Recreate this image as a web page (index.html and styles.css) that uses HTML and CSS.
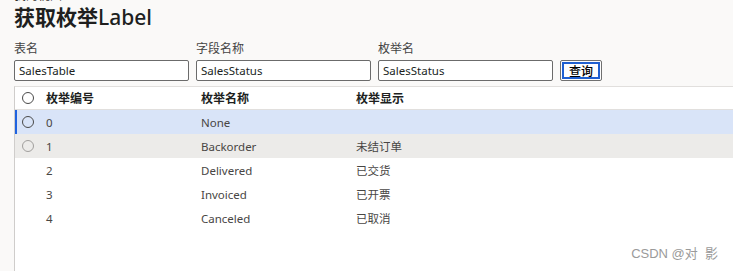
FILE: index.html
```html
<!DOCTYPE html>
<html lang="zh-CN">
<head>
  <meta charset="UTF-8">
  <meta name="viewport" content="width=device-width, initial-scale=1.0">
  <title>获取枚举Label</title>
  <link rel="stylesheet" href="styles.css">
</head>
<body>

  <div class="page">
    <div class="crumb">我的视图</div>
    <h1 class="title">获取枚举<span class="latin">Label</span></h1>

    <div class="filters">
      <div class="field">
        <label for="table">表名</label>
        <input type="text" id="table" value="SalesTable">
      </div>
      <div class="field">
        <label for="field">字段名称</label>
        <input type="text" id="field" value="SalesStatus">
      </div>
      <div class="field">
        <label for="enum">枚举名</label>
        <input type="text" id="enum" value="SalesStatus">
      </div>
      <button type="button" class="query">查询</button>
    </div>

    <div class="grid">
      <div class="row head">
        <div class="cell pick"><span class="radio"></span></div>
        <div class="cell">枚举编号</div>
        <div class="cell">枚举名称</div>
        <div class="cell">枚举显示</div>
      </div>
      <div class="row selected">
        <div class="cell pick"><span class="radio"></span></div>
        <div class="cell">0</div>
        <div class="cell">None</div>
        <div class="cell"></div>
      </div>
      <div class="row hover">
        <div class="cell pick"><span class="radio light"></span></div>
        <div class="cell">1</div>
        <div class="cell">Backorder</div>
        <div class="cell">未结订单</div>
      </div>
      <div class="row">
        <div class="cell pick"></div>
        <div class="cell">2</div>
        <div class="cell">Delivered</div>
        <div class="cell">已交货</div>
      </div>
      <div class="row">
        <div class="cell pick"></div>
        <div class="cell">3</div>
        <div class="cell">Invoiced</div>
        <div class="cell">已开票</div>
      </div>
      <div class="row">
        <div class="cell pick"></div>
        <div class="cell">4</div>
        <div class="cell">Canceled</div>
        <div class="cell">已取消</div>
      </div>
    </div>
  </div>

  <div class="watermark">CSDN @对&nbsp;&nbsp;影</div>

</body>
</html>
```

FILE: styles.css
```css
body {
  margin: 0;
  padding: 0;
  background-color: #faf9f8;
  font-family: "Noto Sans", "Noto Sans CJK SC", sans-serif;
  color: #323130;
  overflow: hidden;
}
.page {
  padding-left: 14px;
  height: 100vh;
  display: flex;
  flex-direction: column;
}
.crumb {
  font-size: 12px;
  line-height: 14px;
  margin-top: -11px;
  color: #323130;
}
.title {
  margin: 0;
  font-size: 21px;
  line-height: 28px;
  font-weight: 700;
  color: #201f1e;
}
.title .latin {
  font-weight: 500;
}
.filters {
  display: flex;
  align-items: flex-end;
  gap: 7px;
  margin-top: 10px;
}
.field label {
  display: block;
  font-size: 12px;
  line-height: 16px;
  margin-bottom: 1px;
  color: #444;
}
.field input {
  box-sizing: border-box;
  width: 175px;
  height: 21px;
  padding: 0 4px;
  border: 1px solid #6b6b6b;
  border-radius: 2px;
  background: #fff;
  font-family: inherit;
  font-size: 11.5px;
  color: #201f1e;
}
.query {
  box-sizing: border-box;
  width: 42px;
  height: 21px;
  padding: 0;
  border: 1px solid #707070;
  border-radius: 2px;
  background: #fdfdfd;
  outline: 2px solid #1f5fd0;
  outline-offset: -4px;
  font-family: inherit;
  font-size: 12px;
  font-weight: 500;
  color: #000;
}
.grid {
  flex: 1;
  margin-top: 5px;
  background: #fff;
  border-top: 1px solid #e1dfdd;
  border-left: 1px solid #cfcdcb;
}
.row {
  display: grid;
  grid-template-columns: 31px 155px 155px 1fr;
  height: 24px;
  align-items: center;
  font-size: 11.5px;
  color: #484644;
}
.row.head {
  height: 22px;
  border-bottom: 1px solid #e1dfdd;
  font-size: 12px;
  font-weight: 700;
  color: #201f1e;
}
.row.selected {
  background: #d9e4f8;
  box-shadow: inset 2px 0 0 #1f63e0;
}
.row.hover {
  background: #ecebe9;
}
.cell {
  white-space: nowrap;
}
.pick {
  display: flex;
  align-items: center;
  padding-left: 7px;
}
.radio {
  box-sizing: border-box;
  width: 12px;
  height: 12px;
  border: 1px solid #4a4a4a;
  border-radius: 50%;
}
.radio.light {
  border-color: #a19f9d;
}
.watermark {
  position: absolute;
  right: 15px;
  bottom: 9px;
  font-family: "Liberation Sans", "Noto Sans CJK SC", sans-serif;
  font-size: 13px;
  color: #9a9a9a;
}
```
